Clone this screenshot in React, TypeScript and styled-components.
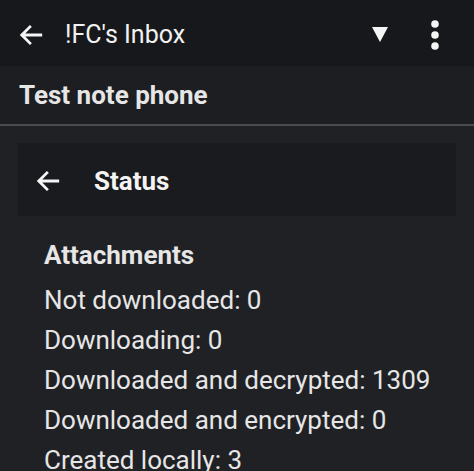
import React from "react";
import styled, { createGlobalStyle } from "styled-components";

const Global = createGlobalStyle`
  html, body { margin: 0; padding: 0; background: #202125; }
  body { font-family: Roboto, "Noto Sans", sans-serif; color: #ececec; }
  #root { width: 474px; height: 471px; overflow: hidden; }
`;

const Page = styled.div`
  display: flex;
  flex-direction: column;
  width: 474px;
  height: 471px;
  background: #202125;
  overflow: hidden;
`;

const AppBar = styled.header`
  height: 66px;
  background: #17181b;
  display: flex;
  align-items: center;
  padding: 3px 34px 0 18px;
  box-sizing: border-box;
  flex-shrink: 0;
`;

const Title = styled.div`
  font-size: 25px;
  color: #f2f2f2;
  margin-left: 21px;
  flex: 1;
`;

const SubBar = styled.div`
  height: 58px;
  background: #1d1e22;
  display: flex;
  align-items: center;
  padding: 0 19px;
  border-bottom: 2px solid #4a4b4f;
  font-size: 26px;
  font-weight: 700;
  color: #e6e6e6;
  flex-shrink: 0;
`;

const Content = styled.main`
  padding: 17px 18px 0;
  display: flex;
  flex-direction: column;
`;

const Card = styled.div`
  height: 73px;
  background: #1a1b1e;
  display: flex;
  align-items: center;
  padding: 2px 17px 0;
  box-sizing: border-box;
  flex-shrink: 0;
`;

const CardTitle = styled.div`
  font-size: 26px;
  font-weight: 700;
  color: #f4f4f4;
  margin-left: 33px;
`;

const Section = styled.section`
  padding: 14px 26px 0;
  display: flex;
  flex-direction: column;
`;

const SectionTitle = styled.div`
  font-size: 26px;
  font-weight: 700;
  color: #e6e6e6;
  line-height: 50px;
`;

const Line = styled.div`
  font-size: 26px;
  color: #e6e6e6;
  line-height: 40px;
  white-space: nowrap;
`;

const IconBtn = styled.div<{ $ml?: number }>`
  display: flex;
  align-items: center;
  justify-content: center;
  margin-left: ${(p) => p.$ml ?? 0}px;
`;

const Arrow = ({ size = 26 }: { size?: number }) => (
  <svg width={size} height={size} viewBox="0 0 24 24" fill="none">
    <path d="M21 12H4M11 4.5L3.5 12L11 19.5" stroke="#f5f5f5" strokeWidth="2.6" strokeLinecap="square" />
  </svg>
);

export default function App() {
  const lines = [
    "Not downloaded: 0",
    "Downloading: 0",
    "Downloaded and decrypted: 1309",
    "Downloaded and encrypted: 0",
    "Created locally: 3",
  ];
  return (
    <>
      <Global />
      <Page>
        <AppBar>
          <Arrow />
          <Title>!FC's Inbox</Title>
          <IconBtn>
            <svg width="16" height="15" viewBox="0 0 16 15">
              <path d="M0 0H16L8 15Z" fill="#f5f5f5" />
            </svg>
          </IconBtn>
          <IconBtn $ml={42}>
            <svg width="10" height="30" viewBox="0 0 10 30">
              <circle cx="5" cy="4" r="3.8" fill="#f5f5f5" />
              <circle cx="5" cy="15" r="3.8" fill="#f5f5f5" />
              <circle cx="5" cy="26" r="3.8" fill="#f5f5f5" />
            </svg>
          </IconBtn>
        </AppBar>
        <SubBar>Test note phone</SubBar>
        <Content>
          <Card>
            <Arrow />
            <CardTitle>Status</CardTitle>
          </Card>
          <Section>
            <SectionTitle>Attachments</SectionTitle>
            {lines.map((l) => (
              <Line key={l}>{l}</Line>
            ))}
          </Section>
        </Content>
      </Page>
    </>
  );
}
